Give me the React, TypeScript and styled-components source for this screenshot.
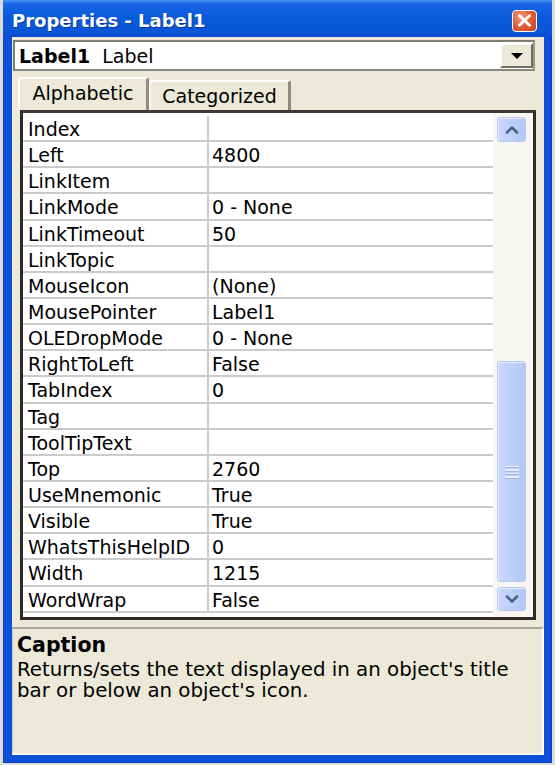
import React from "react";
import styled, { createGlobalStyle } from "styled-components";

type Prop = {
  name: string;
  value: string;
};

const props: Prop[] = [
  { name: "Index", value: "" },
  { name: "Left", value: "4800" },
  { name: "LinkItem", value: "" },
  { name: "LinkMode", value: "0 - None" },
  { name: "LinkTimeout", value: "50" },
  { name: "LinkTopic", value: "" },
  { name: "MouseIcon", value: "(None)" },
  { name: "MousePointer", value: "Label1" },
  { name: "OLEDropMode", value: "0 - None" },
  { name: "RightToLeft", value: "False" },
  { name: "TabIndex", value: "0" },
  { name: "Tag", value: "" },
  { name: "ToolTipText", value: "" },
  { name: "Top", value: "2760" },
  { name: "UseMnemonic", value: "True" },
  { name: "Visible", value: "True" },
  { name: "WhatsThisHelpID", value: "0" },
  { name: "Width", value: "1215" },
  { name: "WordWrap", value: "False" },
];

const GlobalStyle = createGlobalStyle`
  html, body {
    margin: 0;
    padding: 0;
    background: #dcdcdc;
  }
  body {
    font-family: "DejaVu Sans", Verdana, sans-serif;
    color: #000;
  }
`;

const Window = styled.div`
  margin-left: 3px;
  width: 549px;
  height: 763px;
  display: flex;
  flex-direction: column;
  background: #0b50d6;
  box-shadow: inset 1px 0 #0a3fb5, inset -1px 0 #0a3fb5, inset 0 -1px #0a3fb5;
`;

const TitleBar = styled.div`
  flex: none;
  height: 37px;
  box-sizing: border-box;
  padding: 4px 15px 0 9px;
  display: flex;
  align-items: center;
  justify-content: space-between;
  background: linear-gradient(
    #4a95f5 0%,
    #1866e6 10%,
    #0b5ada 45%,
    #0a56d6 85%,
    #0a4ccc 100%
  );
`;

const Title = styled.span`
  font-size: 18px;
  font-weight: bold;
  color: #fff;
  text-shadow: 1px 1px 0 #0a3a9a;
`;

const CloseButton = styled.div`
  width: 25px;
  height: 22px;
  box-sizing: border-box;
  border: 1.5px solid #fff;
  border-radius: 4px;
  background: radial-gradient(circle at 35% 30%, #f0a184 0%, #e0623c 45%, #c9401e 100%);
  display: flex;
  align-items: center;
  justify-content: center;
`;

const Frame = styled.div`
  flex: 1;
  display: flex;
  flex-direction: column;
  margin: 0 8px 8px 9px;
  background: #ece9d8;
`;

const Combo = styled.div`
  margin: 3px 9px 0 1px;
  height: 31px;
  box-sizing: border-box;
  border: 2px solid #7f7d72;
  border-right-color: #9a988c;
  border-bottom-color: #8a887c;
  background: #fff;
  display: flex;
  align-items: center;
  padding-left: 4px;
`;

const ComboName = styled.span`
  font-size: 19px;
  font-weight: bold;
  margin-right: 12px;
`;

const ComboType = styled.span`
  font-size: 19px;
  flex: 1;
`;

const DropButton = styled.div`
  width: 33px;
  height: 25px;
  box-sizing: border-box;
  background: #ece9d8;
  border: 2px solid;
  border-color: #fff #716f64 #716f64 #fff;
  display: flex;
  align-items: center;
  justify-content: center;
`;

const Arrow = styled.div`
  width: 0;
  height: 0;
  border-left: 6px solid transparent;
  border-right: 6px solid transparent;
  border-top: 6px solid #000;
`;

const TabStrip = styled.div`
  height: 39px;
  display: flex;
  align-items: flex-end;
  padding-left: 6px;
`;

const Tab = styled.div<{ $active?: boolean; $width: number }>`
  width: ${(p) => p.$width}px;
  height: ${(p) => (p.$active ? 33 : 30)}px;
  box-sizing: border-box;
  display: flex;
  align-items: center;
  justify-content: center;
  padding-bottom: ${(p) => (p.$active ? 3 : 0)}px;
  font-size: 19px;
  background: #ece9d8;
  border-top: 2px solid #fff;
  border-left: 2px solid ${(p) => (p.$active ? "#fff" : "#f6f5ef")};
  border-right: 3px solid #8e8c80;
  border-radius: 3px 3px 0 0;
`;

const Grid = styled.div`
  margin-left: 8px;
  width: 516px;
  height: 510px;
  box-sizing: border-box;
  border: 3px solid #2b2b2b;
  border-top-color: #3a3a3a;
  background: #fff;
  display: flex;
`;

const Rows = styled.div`
  flex: 1;
  padding-top: 3px;
  display: flex;
  flex-direction: column;
`;

const Row = styled.div`
  height: 26.15px;
  box-sizing: border-box;
  border-bottom: 2px solid #cbcbcb;
  display: grid;
  grid-template-columns: 184px 1fr;
  font-size: 19px;
`;

const Cell = styled.div<{ $value?: boolean }>`
  display: flex;
  align-items: center;
  padding: 2px 0 0 ${(p) => (p.$value ? 3 : 5)}px;
  border-left: ${(p) => (p.$value ? "2px solid #cbcbcb" : "none")};
  white-space: nowrap;
  overflow: hidden;
`;

const ScrollBar = styled.div`
  width: 40px;
  box-sizing: border-box;
  background: #f7f6f1;
  padding: 4px 7px 5px 4px;
  display: flex;
  flex-direction: column;
`;

const ScrollButton = styled.div<{ $height: number }>`
  height: ${(p) => p.$height}px;
  box-sizing: border-box;
  border: 1px solid #b6c8f2;
  border-radius: 3px;
  background: linear-gradient(90deg, #c9d8fc, #bccffa 60%, #b3c8f6);
  box-shadow: inset 1px 1px 0 #e4ecfe;
  display: flex;
  align-items: center;
  justify-content: center;
`;

const Track = styled.div<{ $height: number }>`
  height: ${(p) => p.$height}px;
  flex: none;
`;

const Grip = styled.div`
  display: flex;
  flex-direction: column;
  gap: 2px;
  span {
    display: block;
    width: 14px;
    height: 1.5px;
    background: #e8effe;
    box-shadow: 0 1px 0 #9eb4e6;
  }
`;

const Description = styled.div`
  margin-top: 7px;
  flex: 1;
  box-sizing: border-box;
  border-top: 2px solid #aca899;
  border-left: 1px solid #d0cdbd;
  border-right: 2px solid #fff;
  border-bottom: 2px solid #fff;
  padding: 6px 4px 0 4px;
  font-size: 19.8px;
  line-height: 21px;
  white-space: nowrap;
`;

const DescTitle = styled.div`
  font-weight: bold;
  font-size: 20.5px;
  margin-bottom: 3px;
`;

const Chevron = ({ up }: { up?: boolean }) => (
  <svg width="14" height="9" viewBox="0 0 14 9">
    <polyline
      points={up ? "2,7.5 7,2.5 12,7.5" : "2,1.5 7,6.5 12,1.5"}
      fill="none"
      stroke="#4d6185"
      strokeWidth="2.6"
      strokeLinecap="round"
      strokeLinejoin="round"
    />
  </svg>
);

export default function App() {
  return (
    <>
      <GlobalStyle />
      <Window>
        <TitleBar>
          <Title>Properties - Label1</Title>
          <CloseButton>
            <svg width="15" height="13" viewBox="0 0 15 13">
              <path
                d="M2.5 1.8 L12.5 11.2 M12.5 1.8 L2.5 11.2"
                stroke="#fff"
                strokeWidth="2.8"
                strokeLinecap="round"
              />
            </svg>
          </CloseButton>
        </TitleBar>
        <Frame>
          <Combo>
            <ComboName>Label1</ComboName>
            <ComboType>Label</ComboType>
            <DropButton>
              <Arrow />
            </DropButton>
          </Combo>
          <TabStrip>
            <Tab $active $width={131}>
              Alphabetic
            </Tab>
            <Tab $width={142}>Categorized</Tab>
          </TabStrip>
          <Grid>
            <Rows>
              {props.map((p) => (
                <Row key={p.name}>
                  <Cell>{p.name}</Cell>
                  <Cell $value>{p.value}</Cell>
                </Row>
              ))}
            </Rows>
            <ScrollBar>
              <ScrollButton $height={25}>
                <Chevron up />
              </ScrollButton>
              <Track $height={219} />
              <ScrollButton $height={221}>
                <Grip>
                  <span />
                  <span />
                  <span />
                  <span />
                </Grip>
              </ScrollButton>
              <Track $height={5} />
              <ScrollButton $height={24}>
                <Chevron />
              </ScrollButton>
            </ScrollBar>
          </Grid>
          <Description>
            <DescTitle>Caption</DescTitle>
            Returns/sets the text displayed in an object's title
            <br />
            bar or below an object's icon.
          </Description>
        </Frame>
      </Window>
    </>
  );
}
